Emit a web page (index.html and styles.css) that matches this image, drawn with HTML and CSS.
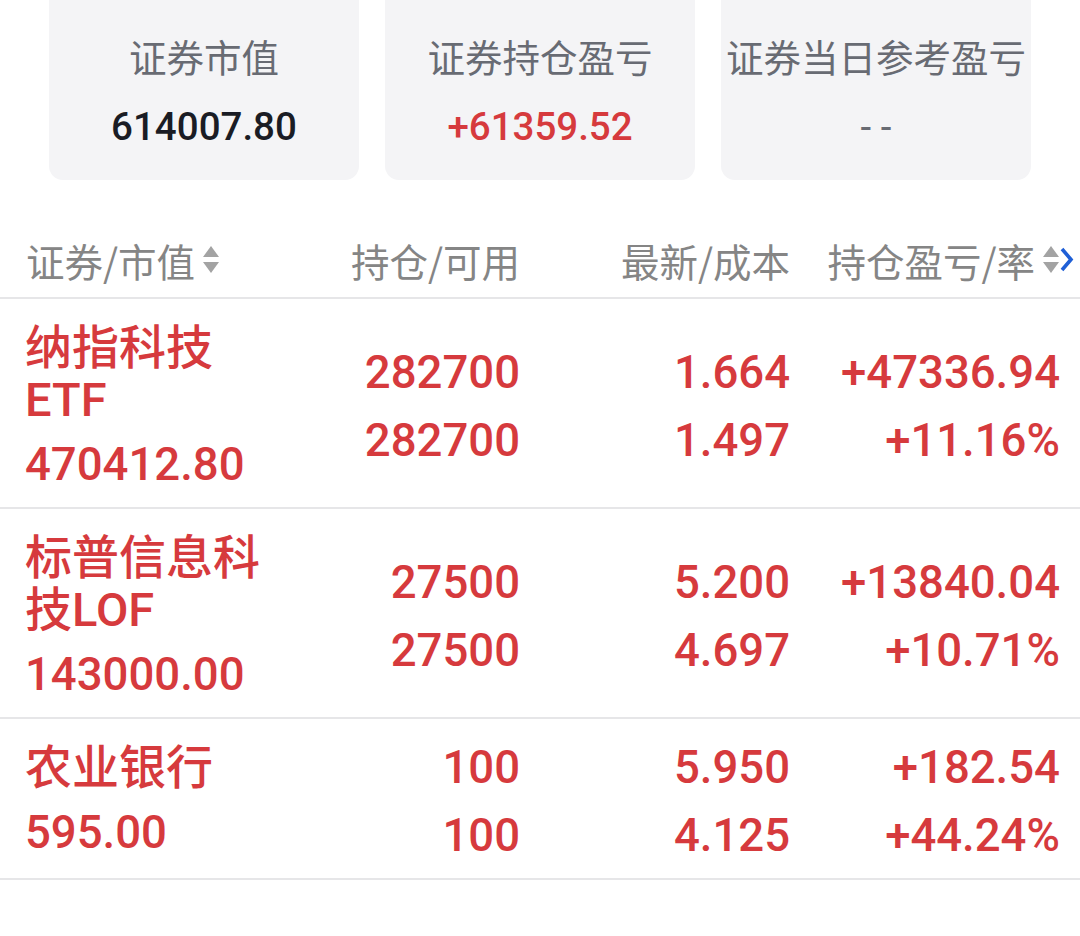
FILE: index.html
```html
<!DOCTYPE html>
<html lang="zh-CN">
<head>
<meta charset="utf-8">
<title>持仓</title>
<link rel="stylesheet" href="styles.css">
</head>
<body>
<div class="page">
  <section class="cards">
    <div class="card">
      <div class="card-title">证券市值</div>
      <div class="card-value">614007.80</div>
    </div>
    <div class="card">
      <div class="card-title">证券持仓盈亏</div>
      <div class="card-value up">+61359.52</div>
    </div>
    <div class="card">
      <div class="card-title">证券当日参考盈亏</div>
      <div class="card-value muted">- -</div>
    </div>
  </section>

  <section class="table">
    <div class="thead">
      <div class="th th-name">证券/市值<svg class="sort" width="18" height="32" viewBox="0 0 18 32"><path d="M9 2 L17 13 L1 13 Z" fill="#a3a3a3"/><path d="M1 18 L17 18 L9 29 Z" fill="#a3a3a3"/></svg></div>
      <div class="th">持仓/可用</div>
      <div class="th">最新/成本</div>
      <div class="th th-last">持仓盈亏/率<svg class="sort sort-more" width="34" height="32" viewBox="0 0 34 32"><path d="M9 2 L17 13 L1 13 Z" fill="#a3a3a3"/><path d="M1 18 L17 18 L9 29 Z" fill="#a3a3a3"/><path d="M20 5 L29 15.5 L20 26" fill="none" stroke="#1f5fd6" stroke-width="3.6" stroke-linejoin="miter"/></svg></div>
    </div>

    <div class="row">
      <div class="cell-name">
        <div class="name">纳指科技ETF</div>
        <div class="mv">470412.80</div>
      </div>
      <div class="cell num"><div>282700</div><div>282700</div></div>
      <div class="cell num"><div>1.664</div><div>1.497</div></div>
      <div class="cell num"><div>+47336.94</div><div>+11.16%</div></div>
    </div>

    <div class="row">
      <div class="cell-name">
        <div class="name">标普信息科技LOF</div>
        <div class="mv">143000.00</div>
      </div>
      <div class="cell num"><div>27500</div><div>27500</div></div>
      <div class="cell num"><div>5.200</div><div>4.697</div></div>
      <div class="cell num"><div>+13840.04</div><div>+10.71%</div></div>
    </div>

    <div class="row">
      <div class="cell-name">
        <div class="name">农业银行</div>
        <div class="mv">595.00</div>
      </div>
      <div class="cell num"><div>100</div><div>100</div></div>
      <div class="cell num"><div>5.950</div><div>4.125</div></div>
      <div class="cell num"><div>+182.54</div><div>+44.24%</div></div>
    </div>
  </section>
</div>
</body>
</html>
```

FILE: styles.css
```css
* { box-sizing: border-box; }
html, body { margin: 0; padding: 0; background: #ffffff; }
body {
  font-family: Roboto, "Noto Sans CJK SC", sans-serif;
  color: #1a1c24;
}
.page { width: 1080px; overflow: hidden; }

.cards {
  display: flex;
  gap: 26px;
  padding: 0 49px;
}
.card {
  flex: 1 1 0;
  height: 180px;
  background: #f4f4f6;
  border-radius: 0 0 14px 14px;
  padding-top: 31px;
  text-align: center;
}
.card-title {
  font-family: "Noto Sans CJK SC", sans-serif;
  font-size: 37.5px;
  line-height: 50px;
  color: #686b73;
  white-space: nowrap;
}
.card-value {
  margin-top: 21px;
  font-family: Roboto, sans-serif;
  font-size: 38.5px;
  font-weight: 500;
  line-height: 50px;
  color: #1a1c24;
}
.card-value.up { color: #d63a3d; }
.card-value.muted { color: #686b73; font-weight: 400; }

.thead, .row {
  display: grid;
  grid-template-columns: 250px 244px 270px 270px;
  padding-left: 26px;
  border-bottom: 2px solid #e6e6e8;
}
.thead {
  padding-top: 55px;
  padding-bottom: 12px;
  align-items: center;
}
.th {
  font-family: "Noto Sans CJK SC", sans-serif;
  font-size: 38.5px;
  line-height: 50px;
  color: #858585;
  text-align: right;
  white-space: nowrap;
}
.th-name {
  text-align: left;
  display: flex;
  align-items: center;
}
.th-last {
  display: flex;
  justify-content: flex-end;
  align-items: center;
  margin-right: -16px;
}
.sort { margin-left: 7px; flex: none; }

.row {
  padding-top: 23px;
  padding-bottom: 8px;
  align-items: center;
  color: #d63a3d;
}
.cell-name { align-self: start; }
.name {
  font-family: Roboto, "Noto Sans CJK SC", sans-serif;
  font-size: 47px;
  line-height: 52px;
  font-weight: 500;
  width: 250px;
  margin-left: -1px;
}
.mv {
  margin-top: 5px;
  margin-left: -1px;
  font-size: 45.5px;
  font-weight: 500;
  line-height: 68px;
}
.num {
  text-align: right;
  font-size: 45.5px;
  font-weight: 500;
  line-height: 68px;
  white-space: nowrap;
  margin-top: -8px;
}
```
